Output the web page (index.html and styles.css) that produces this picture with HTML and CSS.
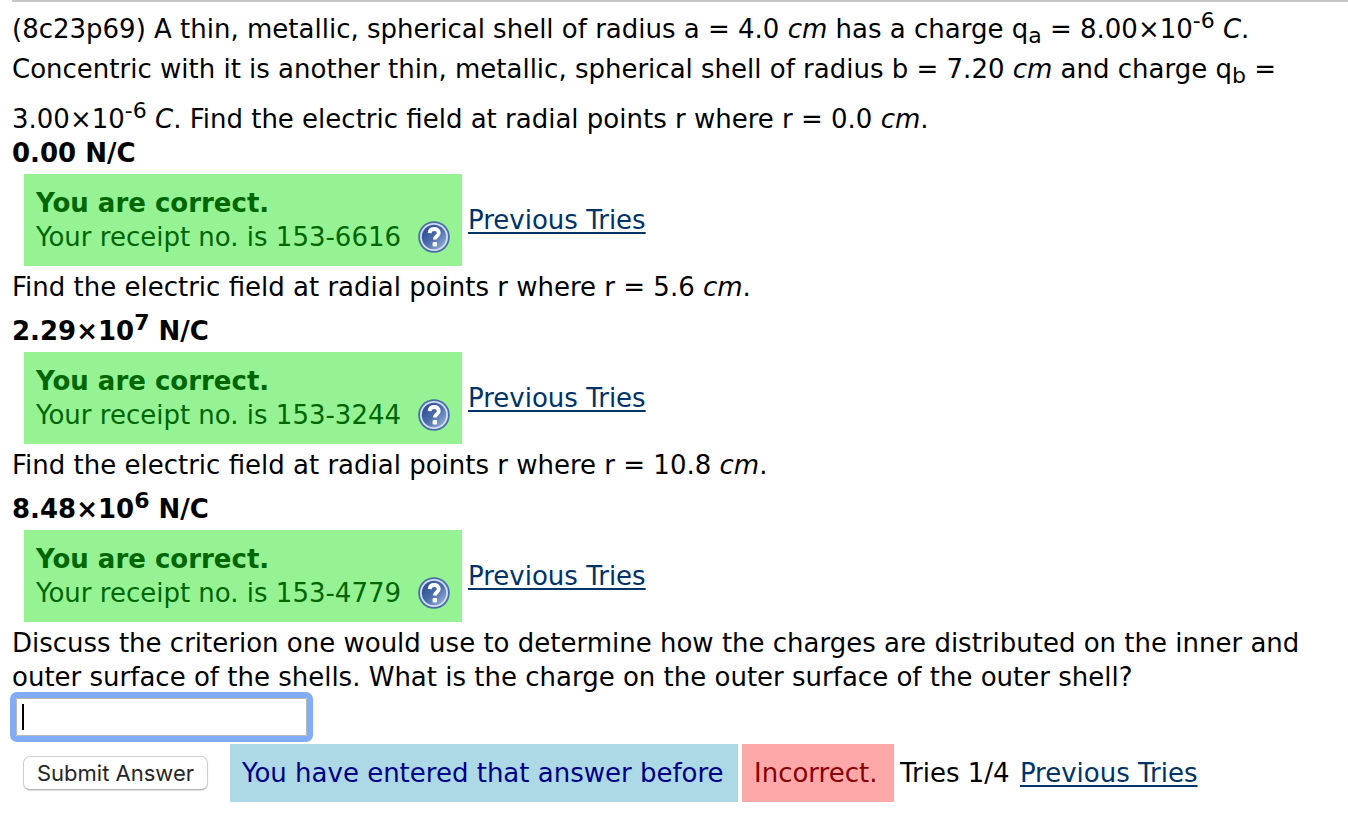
FILE: index.html
```html
<!DOCTYPE html>
<html lang="en">
<head>
<meta charset="utf-8">
<title>Problem 8c23p69</title>
<link rel="stylesheet" href="styles.css">
</head>
<body>
<svg class="defs" aria-hidden="true">
  <defs>
    <linearGradient id="ball" x1="0" y1="0" x2="1" y2="1">
      <stop offset="0" stop-color="#24448c"/>
      <stop offset="0.5" stop-color="#4a6cab"/>
      <stop offset="1" stop-color="#a3bce0"/>
    </linearGradient>
    <symbol id="help" viewBox="0 0 32 32">
      <circle cx="16" cy="16" r="15.8" fill="#4a6da6"/>
      <circle cx="16" cy="16" r="14" fill="#d3def0"/>
      <circle cx="16" cy="16" r="12.2" fill="url(#ball)"/>
      <path d="M11.6 12.2C11.8 9.4 13.6 8 16.2 8c2.700 0 4.600 1.500 4.600 3.900 0 3.300-4 3.300-4 6.600" fill="none" stroke="#fff" stroke-width="3.800"/>
      <rect x="14.600" y="21" width="4.400" height="4.400" rx="1" fill="#fff"/>
    </symbol>
  </defs>
</svg>
<main class="problem">
  <p>(8c23p69) A thin, metallic, spherical shell of radius a = 4.0 <i>cm</i> has a charge q<sub>a</sub> = 8.00×10<sup>-6</sup> <i>C</i>.<br>
  Concentric with it is another thin, metallic, spherical shell of radius b = 7.20 <i>cm</i> and charge q<sub>b</sub> =<br>
  3.00×10<sup>-6</sup> <i>C</i>. Find the electric field at radial points r where r = 0.0 <i>cm</i>.</p>
  <p class="answer">0.00 N/C</p>
  <div class="result">
    <div class="status correct"><strong>You are correct.</strong><span class="receipt">Your receipt no. is 153-6616 <svg class="help" role="img" aria-label="Help"><use href="#help"/></svg></span></div>
    <a href="#tries1">Previous Tries</a>
  </div>
  <p>Find the electric field at radial points r where r = 5.6 <i>cm</i>.</p>
  <p class="answer">2.29×10<sup>7</sup> N/C</p>
  <div class="result">
    <div class="status correct"><strong>You are correct.</strong><span class="receipt">Your receipt no. is 153-3244 <svg class="help" role="img" aria-label="Help"><use href="#help"/></svg></span></div>
    <a href="#tries2">Previous Tries</a>
  </div>
  <p>Find the electric field at radial points r where r = 10.8 <i>cm</i>.</p>
  <p class="answer">8.48×10<sup>6</sup> N/C</p>
  <div class="result">
    <div class="status correct"><strong>You are correct.</strong><span class="receipt">Your receipt no. is 153-4779 <svg class="help" role="img" aria-label="Help"><use href="#help"/></svg></span></div>
    <a href="#tries3">Previous Tries</a>
  </div>
  <form>
    <p><label for="answer">Discuss the criterion one would use to determine how the charges are distributed on the inner and<br>
    outer surface of the shells. What is the charge on the outer surface of the outer shell?</label></p>
    <input class="entry" id="answer" type="text">
    <div class="actions">
      <button class="submit" type="button">Submit Answer</button>
      <div class="status repeated">You have entered that answer before</div>
      <div class="status incorrect">Incorrect.</div>
      <p class="tries">Tries 1/4 <a href="#tries4">Previous Tries</a></p>
    </div>
  </form>
</main>
</body>
</html>
```
FILE: styles.css
```css
* { box-sizing: border-box; }
body {
  margin: 0;
  padding-left: 12px;
  background: #fff;
  color: #000;
  font: 26px/34px Verdana, "DejaVu Sans", sans-serif;
}
.defs { position: absolute; width: 0; height: 0; }
.problem { border-top: 2px solid #c6c6c6; }
p { margin: 0; white-space: nowrap; }
sup, sub { font-size: 22px; }
sup { vertical-align: 10px; line-height: 38px; }
sub { vertical-align: -5px; line-height: 32px; }
a { color: #003366; text-decoration-thickness: 2px; text-underline-offset: 3px; }
.answer { font-weight: bold; }
.result {
  display: flex;
  align-items: center;
  gap: 6px;
  padding: 4px 0 4px 12px;
}
.status { padding: 12px; white-space: nowrap; }
.correct {
  width: 438px;
  background: #96f394;
  color: #006600;
}
.correct strong { display: block; }
.receipt { display: flex; align-items: center; justify-content: space-between; }
.help { width: 32px; height: 32px; }
.entry {
  display: block;
  width: 291px;
  height: 38px;
  margin: 4px 0 0 4px;
  padding: 4px 6px;
  border: 1px solid #b9b9b9;
  border-radius: 1px;
  outline: 6px solid #82abf8;
  outline-offset: 0;
  background: linear-gradient(#000, #000) 5px center / 2px 26px no-repeat #fff;
  font: inherit;
}
.actions {
  display: flex;
  align-items: center;
  gap: 4px;
  padding: 8px 0 0 11px;
}
.submit {
  width: 185px;
  height: 34px;
  margin-right: 18px;
  padding: 0;
  border: 1px solid #cfcfcf;
  border-bottom-color: #b5b5b5;
  border-radius: 7px;
  background: #fff;
  box-shadow: 0 1px 1px #ddd;
  color: #262626;
  font: 22px/28px Inter, sans-serif;
}
.repeated { min-width: 508px; background: #add8e6; color: #000088; }
.incorrect { min-width: 152px; background: #ffa8aa; color: #880000; }
.tries { padding-left: 2px; }
.tries a { margin-left: 2px; }
```
